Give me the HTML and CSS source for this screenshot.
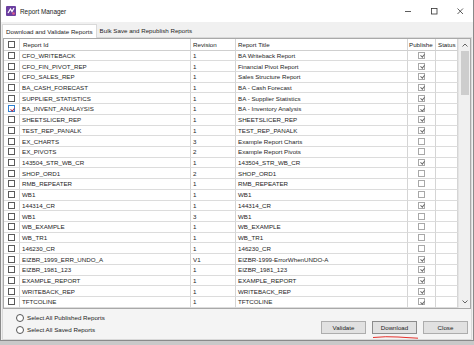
FILE: index.html
```html
<!DOCTYPE html>
<html>
<head>
<meta charset="utf-8">
<link rel="stylesheet" href="styles.css">
</head>
<body>
<div class="window">
  <div class="titlebar">
    <svg class="appicon" width="10" height="10" viewBox="0 0 10 10">
      <rect x="0" y="0" width="10" height="10" rx="1" fill="#6b3fa0"/>
      <path d="M2 7 L4.5 3 L6 5.5 L8 2" stroke="#fff" stroke-width="1.2" fill="none"/>
      <circle cx="7.5" cy="7.5" r="1.3" fill="#e05a8a"/>
    </svg>
    <span class="title">Report Manager</span>
    <div class="controls">
      <svg class="ctl" width="10" height="10" viewBox="0 0 10 10"><path d="M2 5.5 H8" stroke="#333" stroke-width="0.8"/></svg>
      <svg class="ctl" width="10" height="10" viewBox="0 0 10 10"><rect x="2.5" y="2.5" width="5.5" height="5.5" fill="none" stroke="#333" stroke-width="0.8"/></svg>
      <svg class="ctl" width="10" height="10" viewBox="0 0 10 10"><path d="M2.5 2.5 L8 8 M8 2.5 L2.5 8" stroke="#333" stroke-width="0.8"/></svg>
    </div>
  </div>
  <div class="tabs">
    <div class="tab active">Download and Validate Reports</div>
    <div class="tab">Bulk Save and Republish Reports</div>
  </div>
  <div class="panel">
    <div class="grid">
      <div class="rows">
        <div class="row head"><span class="c chk"><i class="cb"></i></span><span class="c pl">Report Id</span><span class="c">Revision</span><span class="c">Report Title</span><span class="c clip">Publishe</span><span class="c">Status</span></div>
        <div class="row"><span class="c chk"><i class="cb"></i></span><span class="c">CFO_WRITEBACK</span><span class="c">1</span><span class="c">BA Writeback Report</span><span class="c pub"><i class="cb dis on"></i></span><span class="c"></span></div>
        <div class="row"><span class="c chk"><i class="cb"></i></span><span class="c">CFO_FIN_PIVOT_REP</span><span class="c">1</span><span class="c">Financial Pivot Report</span><span class="c pub"><i class="cb dis on"></i></span><span class="c"></span></div>
        <div class="row"><span class="c chk"><i class="cb"></i></span><span class="c">CFO_SALES_REP</span><span class="c">1</span><span class="c">Sales Structure Report</span><span class="c pub"><i class="cb dis on"></i></span><span class="c"></span></div>
        <div class="row"><span class="c chk"><i class="cb"></i></span><span class="c">BA_CASH_FORECAST</span><span class="c">1</span><span class="c">BA - Cash Forecast</span><span class="c pub"><i class="cb dis on"></i></span><span class="c"></span></div>
        <div class="row"><span class="c chk"><i class="cb"></i></span><span class="c">SUPPLIER_STATISTICS</span><span class="c">1</span><span class="c">BA - Supplier Statistics</span><span class="c pub"><i class="cb dis on"></i></span><span class="c"></span></div>
        <div class="row"><span class="c chk"><i class="cb focus on"></i></span><span class="c">BA_INVENT_ANALAYSIS</span><span class="c">1</span><span class="c">BA - Inventory Analysis</span><span class="c pub"><i class="cb dis on"></i></span><span class="c"></span></div>
        <div class="row"><span class="c chk"><i class="cb"></i></span><span class="c">SHEETSLICER_REP</span><span class="c">1</span><span class="c">SHEETSLICER_REP</span><span class="c pub"><i class="cb dis on"></i></span><span class="c"></span></div>
        <div class="row"><span class="c chk"><i class="cb"></i></span><span class="c">TEST_REP_PANALK</span><span class="c">1</span><span class="c">TEST_REP_PANALK</span><span class="c pub"><i class="cb dis on"></i></span><span class="c"></span></div>
        <div class="row"><span class="c chk"><i class="cb"></i></span><span class="c">EX_CHARTS</span><span class="c">3</span><span class="c">Example Report Charts</span><span class="c pub"><i class="cb dis"></i></span><span class="c"></span></div>
        <div class="row"><span class="c chk"><i class="cb"></i></span><span class="c">EX_PIVOTS</span><span class="c">2</span><span class="c">Example Report Pivots</span><span class="c pub"><i class="cb dis"></i></span><span class="c"></span></div>
        <div class="row"><span class="c chk"><i class="cb"></i></span><span class="c">143504_STR_WB_CR</span><span class="c">1</span><span class="c">143504_STR_WB_CR</span><span class="c pub"><i class="cb dis on"></i></span><span class="c"></span></div>
        <div class="row"><span class="c chk"><i class="cb"></i></span><span class="c">SHOP_ORD1</span><span class="c">2</span><span class="c">SHOP_ORD1</span><span class="c pub"><i class="cb dis"></i></span><span class="c"></span></div>
        <div class="row"><span class="c chk"><i class="cb"></i></span><span class="c">RMB_REPEATER</span><span class="c">1</span><span class="c">RMB_REPEATER</span><span class="c pub"><i class="cb dis"></i></span><span class="c"></span></div>
        <div class="row"><span class="c chk"><i class="cb"></i></span><span class="c">WB1</span><span class="c">1</span><span class="c">WB1</span><span class="c pub"><i class="cb dis"></i></span><span class="c"></span></div>
        <div class="row"><span class="c chk"><i class="cb"></i></span><span class="c">144314_CR</span><span class="c">1</span><span class="c">144314_CR</span><span class="c pub"><i class="cb dis on"></i></span><span class="c"></span></div>
        <div class="row"><span class="c chk"><i class="cb"></i></span><span class="c">WB1</span><span class="c">3</span><span class="c">WB1</span><span class="c pub"><i class="cb dis"></i></span><span class="c"></span></div>
        <div class="row"><span class="c chk"><i class="cb"></i></span><span class="c">WB_EXAMPLE</span><span class="c">1</span><span class="c">WB_EXAMPLE</span><span class="c pub"><i class="cb dis"></i></span><span class="c"></span></div>
        <div class="row"><span class="c chk"><i class="cb"></i></span><span class="c">WB_TR1</span><span class="c">1</span><span class="c">WB_TR1</span><span class="c pub"><i class="cb dis"></i></span><span class="c"></span></div>
        <div class="row"><span class="c chk"><i class="cb"></i></span><span class="c">146230_CR</span><span class="c">1</span><span class="c">146230_CR</span><span class="c pub"><i class="cb dis"></i></span><span class="c"></span></div>
        <div class="row"><span class="c chk"><i class="cb"></i></span><span class="c">EIZBR_1999_ERR_UNDO_A</span><span class="c">V1</span><span class="c">EIZBR-1999-ErrorWhenUNDO-A</span><span class="c pub"><i class="cb dis on"></i></span><span class="c"></span></div>
        <div class="row"><span class="c chk"><i class="cb"></i></span><span class="c">EIZBR_1981_123</span><span class="c">1</span><span class="c">EIZBR_1981_123</span><span class="c pub"><i class="cb dis on"></i></span><span class="c"></span></div>
        <div class="row"><span class="c chk"><i class="cb"></i></span><span class="c">EXAMPLE_REPORT</span><span class="c">1</span><span class="c">EXAMPLE_REPORT</span><span class="c pub"><i class="cb dis on"></i></span><span class="c"></span></div>
        <div class="row"><span class="c chk"><i class="cb"></i></span><span class="c">WRITEBACK_REP</span><span class="c">1</span><span class="c">WRITEBACK_REP</span><span class="c pub"><i class="cb dis on"></i></span><span class="c"></span></div>
        <div class="row"><span class="c chk"><i class="cb"></i></span><span class="c">TFTCOLINE</span><span class="c">1</span><span class="c">TFTCOLINE</span><span class="c pub"><i class="cb dis on"></i></span><span class="c"></span></div>
      </div>
      <div class="vscroll">
        <div class="arrow"><svg width="8" height="6" viewBox="0 0 8 6"><path d="M1.5 4.5 L4 2 L6.5 4.5" stroke="#555" stroke-width="0.9" fill="none"/></svg></div>
        <div class="track"><div class="thumb"></div></div>
        <div class="arrow"><svg width="8" height="6" viewBox="0 0 8 6"><path d="M1.5 1.5 L4 4 L6.5 1.5" stroke="#555" stroke-width="0.9" fill="none"/></svg></div>
      </div>
    </div>
    <div class="bottom">
      <div class="radios">
        <label class="radio"><i class="rb"></i>Select All Published Reports</label>
        <label class="radio"><i class="rb"></i>Select All Saved Reports</label>
      </div>
      <div class="buttons">
        <div class="btn">Validate</div>
        <div class="btn dl">Download
          <svg class="scribble" width="48" height="5" viewBox="0 0 48 5"><path d="M1 2.5 Q 14 1.2 26 2 T 46 3.2" stroke="#e5322d" stroke-width="1" fill="none"/></svg>
        </div>
        <div class="btn">Close</div>
      </div>
    </div>
  </div>
</div>
</body>
</html>
```

FILE: styles.css
```css
* { box-sizing: border-box; }
html, body { margin: 0; padding: 0; }
body {
  width: 474px;
  height: 345px;
  background: #c9c9c9;
  font-family: "Liberation Sans", Arial, sans-serif;
  font-size: 6.2px;
  color: #1e1e1e;
  overflow: hidden;
}
.window {
  width: 474px;
  height: 341px;
  background: #f0f0f0;
  border: 1px solid #8a8a8a;
  border-top: none;
  display: flex;
  flex-direction: column;
}
.titlebar {
  height: 22px;
  background: #fff;
  display: flex;
  align-items: center;
  padding-left: 5px;
  flex: none;
}
.appicon { flex: none; }
.title { margin-left: 4px; font-size: 6.4px; color: #222; }
.controls {
  margin-left: auto;
  display: flex;
  gap: 16px;
  padding-right: 8px;
}
.ctl { display: block; }
.tabs {
  height: 15px;
  flex: none;
  display: flex;
  align-items: flex-end;
  padding-left: 1px;
}
.tab {
  height: 12px;
  line-height: 11px;
  padding: 0 3px;
  white-space: nowrap;
}
.tab.active {
  height: 14px;
  line-height: 13px;
  background: #fff;
  border: 1px solid #d9d9d9;
  border-bottom: none;
  margin-bottom: -1px;
  position: relative;
  z-index: 1;
  padding: 0 3px;
}
.panel {
  flex: 1;
  margin: 0 1px 0 1px;
  border: 1px solid #d9d9d9;
  background: #f4f4f4;
  display: flex;
  flex-direction: column;
}
.grid {
  border: 1px solid #a9a9a9;
  background: #fff;
  display: flex;
  flex: none;
}
.rows { display: flex; flex-direction: column; }
.row {
  display: grid;
  grid-template-columns: 16px 171px 45px 172px 28px 22px;
  height: 10.73px;
}
.row.head { height: 11.5px; }
.c {
  border-right: 1px solid #d5d5d5;
  border-bottom: 1px solid #dcdcdc;
  padding-left: 2px;
  display: flex;
  align-items: center;
  white-space: nowrap;
  overflow: hidden;
  color: #1e1e1e;
}
.head .c { color: #222; border-bottom-color: #cfcfcf; }
.head .pl { padding-left: 3px; }
.clip { padding-left: 1px; }
.chk, .pub { justify-content: center; padding-left: 0; }
.cb {
  display: block;
  width: 7px;
  height: 7px;
  border: 1px solid #5a5a5a;
  background: #fff;
  position: relative;
}
.cb.dis { border-color: #a8a8a8; }
.cb.focus { border-color: #2f7fd0; }
.cb.on::after {
  content: "";
  position: absolute;
  left: 1.6px;
  top: 0.2px;
  width: 1.6px;
  height: 3.4px;
  border: solid #6a6a6a;
  border-width: 0 0.9px 0.9px 0;
  transform: rotate(40deg);
}
.cb.focus.on::after { border-color: #b0304e; }
.vscroll {
  width: 12px;
  display: flex;
  flex-direction: column;
  background: #f0f0f0;
  border-left: 1px solid #e4e4e4;
}
.arrow {
  height: 11.5px;
  display: flex;
  align-items: center;
  justify-content: center;
  flex: none;
}
.track { flex: 1; }
.thumb {
  height: 44px;
  margin: 0 1.5px;
  background: #cdcdcd;
}
.bottom {
  flex: 1;
  display: flex;
  justify-content: space-between;
}
.radios {
  display: flex;
  flex-direction: column;
  gap: 4px;
  padding: 5px 0 0 13px;
}
.radio {
  display: flex;
  align-items: center;
  height: 8px;
  color: #222;
}
.rb {
  width: 8px;
  height: 8px;
  border: 1px solid #555;
  border-radius: 50%;
  background: #fff;
  margin-right: 3px;
  flex: none;
}
.buttons {
  display: flex;
  gap: 6px;
  padding: 12px 3px 0 0;
  align-items: flex-start;
}
.btn {
  width: 45px;
  height: 13px;
  background: #e1e1e1;
  border: 1px solid #adadad;
  display: flex;
  align-items: center;
  justify-content: center;
  color: #222;
}
.btn.dl { position: relative; border-color: #8c8c8c; }
.scribble {
  position: absolute;
  left: -1px;
  top: 13px;
}
```
